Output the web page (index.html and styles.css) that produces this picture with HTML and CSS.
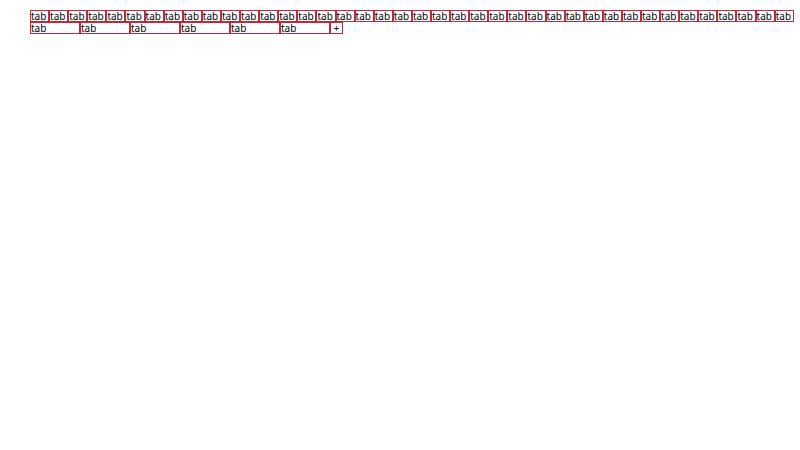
FILE: index.html
```html
<!DOCTYPE html>
<html>
<head>
<meta charset="utf-8">
<link rel="stylesheet" href="styles.css">
</head>
<body>
<div class="tabbar">
  <div class="row">
    <span class="tab">tab</span><span class="tab">tab</span><span class="tab">tab</span><span class="tab">tab</span><span class="tab">tab</span><span class="tab">tab</span><span class="tab">tab</span><span class="tab">tab</span><span class="tab">tab</span><span class="tab">tab</span>
    <span class="tab">tab</span><span class="tab">tab</span><span class="tab">tab</span><span class="tab">tab</span><span class="tab">tab</span><span class="tab">tab</span><span class="tab">tab</span><span class="tab">tab</span><span class="tab">tab</span><span class="tab">tab</span>
    <span class="tab">tab</span><span class="tab">tab</span><span class="tab">tab</span><span class="tab">tab</span><span class="tab">tab</span><span class="tab">tab</span><span class="tab">tab</span><span class="tab">tab</span><span class="tab">tab</span><span class="tab">tab</span>
    <span class="tab">tab</span><span class="tab">tab</span><span class="tab">tab</span><span class="tab">tab</span><span class="tab">tab</span><span class="tab">tab</span><span class="tab">tab</span><span class="tab">tab</span><span class="tab">tab</span><span class="tab">tab</span>
  </div>
  <div class="row">
    <span class="tab wide">tab</span><span class="tab wide">tab</span><span class="tab wide">tab</span><span class="tab wide">tab</span><span class="tab wide">tab</span><span class="tab wide">tab</span><span class="tab add">+</span>
  </div>
</div>
</body>
</html>
```
FILE: styles.css
```css
html, body {
  margin: 0;
  background: #ffffff;
}
.tabbar {
  padding: 10px 0 0 30px;
  font-family: "Noto Sans", sans-serif;
  font-size: 10px;
  color: #000;
}
.row {
  display: flex;
}
.tab {
  box-sizing: border-box;
  width: 19.1px;
  height: 12px;
  line-height: 10px;
  border: 1px solid #c0283c;
  white-space: nowrap;
  overflow: hidden;
  flex: none;
}
.tab.wide {
  width: 50px;
}
.tab.add {
  width: 12.7px;
  text-align: center;
}
```
